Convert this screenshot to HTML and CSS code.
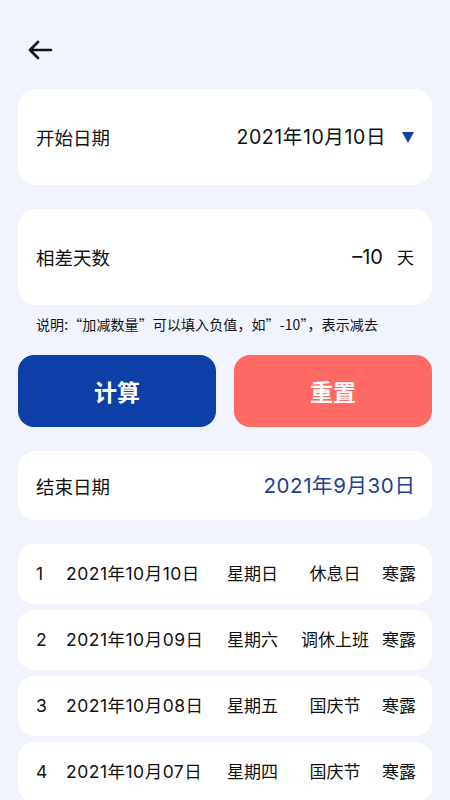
FILE: index.html
```html
<!DOCTYPE html>
<html lang="zh">
<head>
<meta charset="utf-8">
<link rel="stylesheet" href="styles.css">
</head>
<body>
<div class="page">
  <div class="topbar">
    <svg class="back" width="26" height="20" viewBox="0 0 26 20"><path d="M24 10H3M11 2L3 10L11 18" fill="none" stroke="#111" stroke-width="2.7" stroke-linecap="round" stroke-linejoin="round"/></svg>
  </div>
  <div class="card tall">
    <span class="label">开始日期</span>
    <span class="right"><span class="date">2021年10月10日</span><span class="tri"></span></span>
  </div>
  <div class="card tall gap">
    <span class="label">相差天数</span>
    <span class="right"><span class="num">–10</span><span class="unit">天</span></span>
  </div>
  <p class="note">说明:“加减数量”可以填入负值，如”-10”，表示减去</p>
  <div class="buttons">
    <div class="btn calc">计算</div>
    <div class="btn reset">重置</div>
  </div>
  <div class="card result">
    <span class="label">结束日期</span>
    <span class="enddate">2021年9月30日</span>
  </div>
  <div class="list">
    <div class="row"><span class="c-idx">1</span><span class="c-date">2021年10月10日</span><span class="c-week">星期日</span><span class="c-type">休息日</span><span class="c-term">寒露</span></div>
    <div class="row"><span class="c-idx">2</span><span class="c-date">2021年10月09日</span><span class="c-week">星期六</span><span class="c-type">调休上班</span><span class="c-term">寒露</span></div>
    <div class="row"><span class="c-idx">3</span><span class="c-date">2021年10月08日</span><span class="c-week">星期五</span><span class="c-type">国庆节</span><span class="c-term">寒露</span></div>
    <div class="row"><span class="c-idx">4</span><span class="c-date">2021年10月07日</span><span class="c-week">星期四</span><span class="c-type">国庆节</span><span class="c-term">寒露</span></div>
  </div>
</div>
</body>
</html>
```
FILE: styles.css
```css
* { box-sizing: border-box; }
html, body { margin: 0; padding: 0; }
body {
  background: #f1f4fd;
  font-family: Inter, "Noto Sans CJK SC", sans-serif;
  color: #111;
  width: 450px;
  height: 800px;
  overflow: hidden;
}
.page { padding: 0 18px; }
.topbar {
  height: 89px;
  display: flex;
  align-items: flex-start;
  padding-top: 40px;
  padding-left: 9px;
}
.back { display: block; }
.card {
  background: #fff;
  border-radius: 18px;
  display: flex;
  align-items: center;
  justify-content: space-between;
  padding: 0 18px;
}
.tall { height: 96px; }
.gap { margin-top: 24px; }
.label { font-size: 18.5px; line-height: 24px; font-family: "Noto Sans CJK SC", sans-serif; }
.right { display: flex; align-items: center; }
.date { font-size: 19.5px; line-height: 24px; letter-spacing: 0.6px; }
.tri {
  width: 0; height: 0;
  border-left: 6.5px solid transparent;
  border-right: 6.5px solid transparent;
  border-top: 11px solid #1441a6;
  margin-left: 16px;
}
.num { font-size: 20px; line-height: 24px; }
.unit { font-size: 17px; line-height: 24px; margin-left: 14px; font-family: "Noto Sans CJK SC", sans-serif; }
.note {
  margin: 0;
  padding: 9px 0 0 18px;
  height: 50px;
  font-family: "Noto Sans CJK SC", sans-serif;
  font-size: 14px;
  letter-spacing: 0.1px;
  line-height: 20px;
  white-space: nowrap;
}
.buttons {
  display: grid;
  grid-template-columns: 1fr 1fr;
  gap: 18px;
}
.btn {
  height: 72px;
  border-radius: 16px;
  display: flex;
  align-items: center;
  justify-content: center;
  color: #fff;
  font-size: 23px;
  font-weight: 700;
  font-family: "Noto Sans CJK SC", sans-serif;
}
.calc { background: #0d40a6; }
.reset { background: #ff6b64; }
.result { height: 69px; margin-top: 24px; padding-right: 16.5px; }
.enddate { font-size: 20.5px; line-height: 24px; letter-spacing: 0.6px; color: #1a3f94; }
.list {
  margin-top: 24px;
  display: flex;
  flex-direction: column;
  gap: 6px;
}
.row {
  background: #fff;
  border-radius: 16px;
  height: 60px;
  flex-shrink: 0;
  display: flex;
  align-items: center;
  padding: 0 16px 0 18px;
  font-size: 17px;
  line-height: 22px;
}
.c-idx { width: 30px; font-size: 17.5px; }
.c-date { width: 161px; font-size: 17.5px; letter-spacing: 0.5px; }
.c-week { width: 65px; }
.c-type { width: 86px; text-align: center; }
.c-term { margin-left: auto; }
```
